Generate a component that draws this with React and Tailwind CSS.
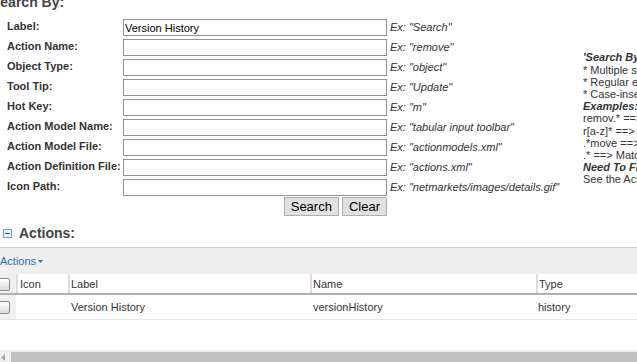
export default function App() {
  const rows = [
    ["Label:", "Version History", 'Ex: "Search"'],
    ["Action Name:", "", 'Ex: "remove"'],
    ["Object Type:", "", 'Ex: "object"'],
    ["Tool Tip:", "", 'Ex: "Update"'],
    ["Hot Key:", "", 'Ex: "m"'],
    ["Action Model Name:", "", 'Ex: "tabular input toolbar"'],
    ["Action Model File:", "", 'Ex: "actionmodels.xml"'],
    ["Action Definition File:", "", 'Ex: "actions.xml"'],
    ["Icon Path:", "", 'Ex: "netmarkets/images/details.gif"'],
  ];
  const Check = () => (
    <div className="w-[13px] h-[13px] -ml-[3px] border border-[#8a8a8a] bg-gradient-to-b from-[#fdfdfd] to-[#dcdcdc] rounded-[2px]" />
  );
  return (
    <div className="w-[637px] h-[362px] overflow-hidden bg-white flex flex-col text-[#333] font-['Liberation_Sans',Arial,sans-serif]">
      <div className="-mt-[6px] -ml-[9px] h-[16px] leading-[16px] text-[14px] font-bold text-[#444] whitespace-nowrap">
        Search By:
      </div>
      <div className="mt-[7px] flex">
        <div className="pl-[7px] shrink-0">
          <div className="grid grid-cols-[116px_264px_196px]">
            {rows.map(([label, value, ex]) => (
              <div key={label} className="contents">
                <div className="h-[20px] flex items-center pb-[1px] text-[11px] font-bold whitespace-nowrap">{label}</div>
                <div className="h-[20px]">
                  <input
                    readOnly
                    value={value}
                    className="mt-[2px] block w-[264px] h-[17px] border border-[#939393] px-[1px] text-[11px] text-black bg-white outline-none font-['Liberation_Sans',Arial,sans-serif]"
                  />
                </div>
                <div className="h-[20px] flex items-center pl-[3px] text-[11px] italic whitespace-nowrap">{ex}</div>
              </div>
            ))}
          </div>
          <div className="w-[380px] flex justify-end gap-[3px]">
            <button className="h-[19px] px-[6px] border border-[#adadad] bg-[#e1e1e1] text-[13px] leading-[15px] text-black">Search</button>
            <button className="h-[19px] px-[6px] border border-[#adadad] bg-[#e1e1e1] text-[13px] leading-[15px] text-black">Clear</button>
          </div>
        </div>
        <div className="flex items-center overflow-hidden">
          <div className="text-[11px] leading-[12.2px] whitespace-nowrap pt-[4px]">
            <div className="font-bold italic">'Search By' Tips:</div>
            <div>* Multiple search criteria are combined</div>
            <div>* Regular expressions are supported</div>
            <div>* Case-insensitive matching</div>
            <div className="font-bold italic">Examples:</div>
            <div>remov.* ==&gt; Matches remove, removeAll</div>
            <div>r[a-z]* ==&gt; Matches rename, remove</div>
            <div>.*move ==&gt; Matches remove, move</div>
            <div>.* ==&gt; Matches everything</div>
            <div className="font-bold italic">Need To Find More?</div>
            <div>See the Actions documentation</div>
          </div>
        </div>
      </div>

      <div className="mt-[9px] h-[16px] flex items-center">
        <svg width="9" height="9" viewBox="0 0 9 9" className="ml-[3px] shrink-0">
          <rect x="0.5" y="0.5" width="8" height="8" fill="#eef3f9" stroke="#7f9ec4" />
          <rect x="2" y="4" width="5" height="1" fill="#2d5e96" />
        </svg>
        <span className="ml-[7px] text-[14px] leading-[16px] font-bold text-[#444]">Actions:</span>
      </div>

      <div className="mt-[6px] h-[27px] border-t border-[#cfcfcf] bg-[#f0f0f0] flex items-center">
        <span className="text-[11px] text-[#2f6ea8]">Actions</span>
        <svg width="5" height="3" viewBox="0 0 5 3" className="ml-[2px] mt-[1px]">
          <path d="M0 0H5L2.5 3Z" fill="#2f6ea8" />
        </svg>
      </div>

      <div className="flex h-[21px] bg-white border-b-2 border-[#b0b0b0] text-[11px]">
        <div className="w-[16px] shrink-0 flex items-center pt-[2px] bg-[#f0f0f0]"><Check /></div>
        <div className="w-[52px] shrink-0 border-l-2 border-[#dcdcdc] pl-[2px] pt-[2px] flex items-center">Icon</div>
        <div className="w-[242px] shrink-0 border-l-2 border-[#dcdcdc] pl-[1px] pt-[2px] flex items-center">Label</div>
        <div className="w-[226px] shrink-0 border-l-2 border-[#dcdcdc] pl-[1px] pt-[2px] flex items-center">Name</div>
        <div className="flex-1 border-l-2 border-[#dcdcdc] pl-[1px] pt-[2px] flex items-center">Type</div>
      </div>
      <div className="flex h-[25px] bg-white border-b border-[#e6e6e6] text-[11px]">
        <div className="w-[16px] shrink-0 flex items-center bg-[#f0f0f0]"><Check /></div>
        <div className="w-[52px] shrink-0" />
        <div className="w-[242px] shrink-0 pl-[3px] flex items-center">Version History</div>
        <div className="w-[226px] shrink-0 pl-[3px] flex items-center">versionHistory</div>
        <div className="flex-1 pl-[2px] flex items-center">history</div>
      </div>

      <div className="mt-auto h-[12px] bg-[#f0f0f0] flex items-end">
        <div className="w-[11px] h-[10px] flex items-center">
          <svg width="5" height="7" viewBox="0 0 5 7" className="ml-[1px]">
            <path d="M4 0V7L0 3.5Z" fill="#a3a3a3" />
          </svg>
        </div>
        <div className="flex-1 h-[10px] bg-[#c1c1c1]" />
      </div>
    </div>
  );
}
